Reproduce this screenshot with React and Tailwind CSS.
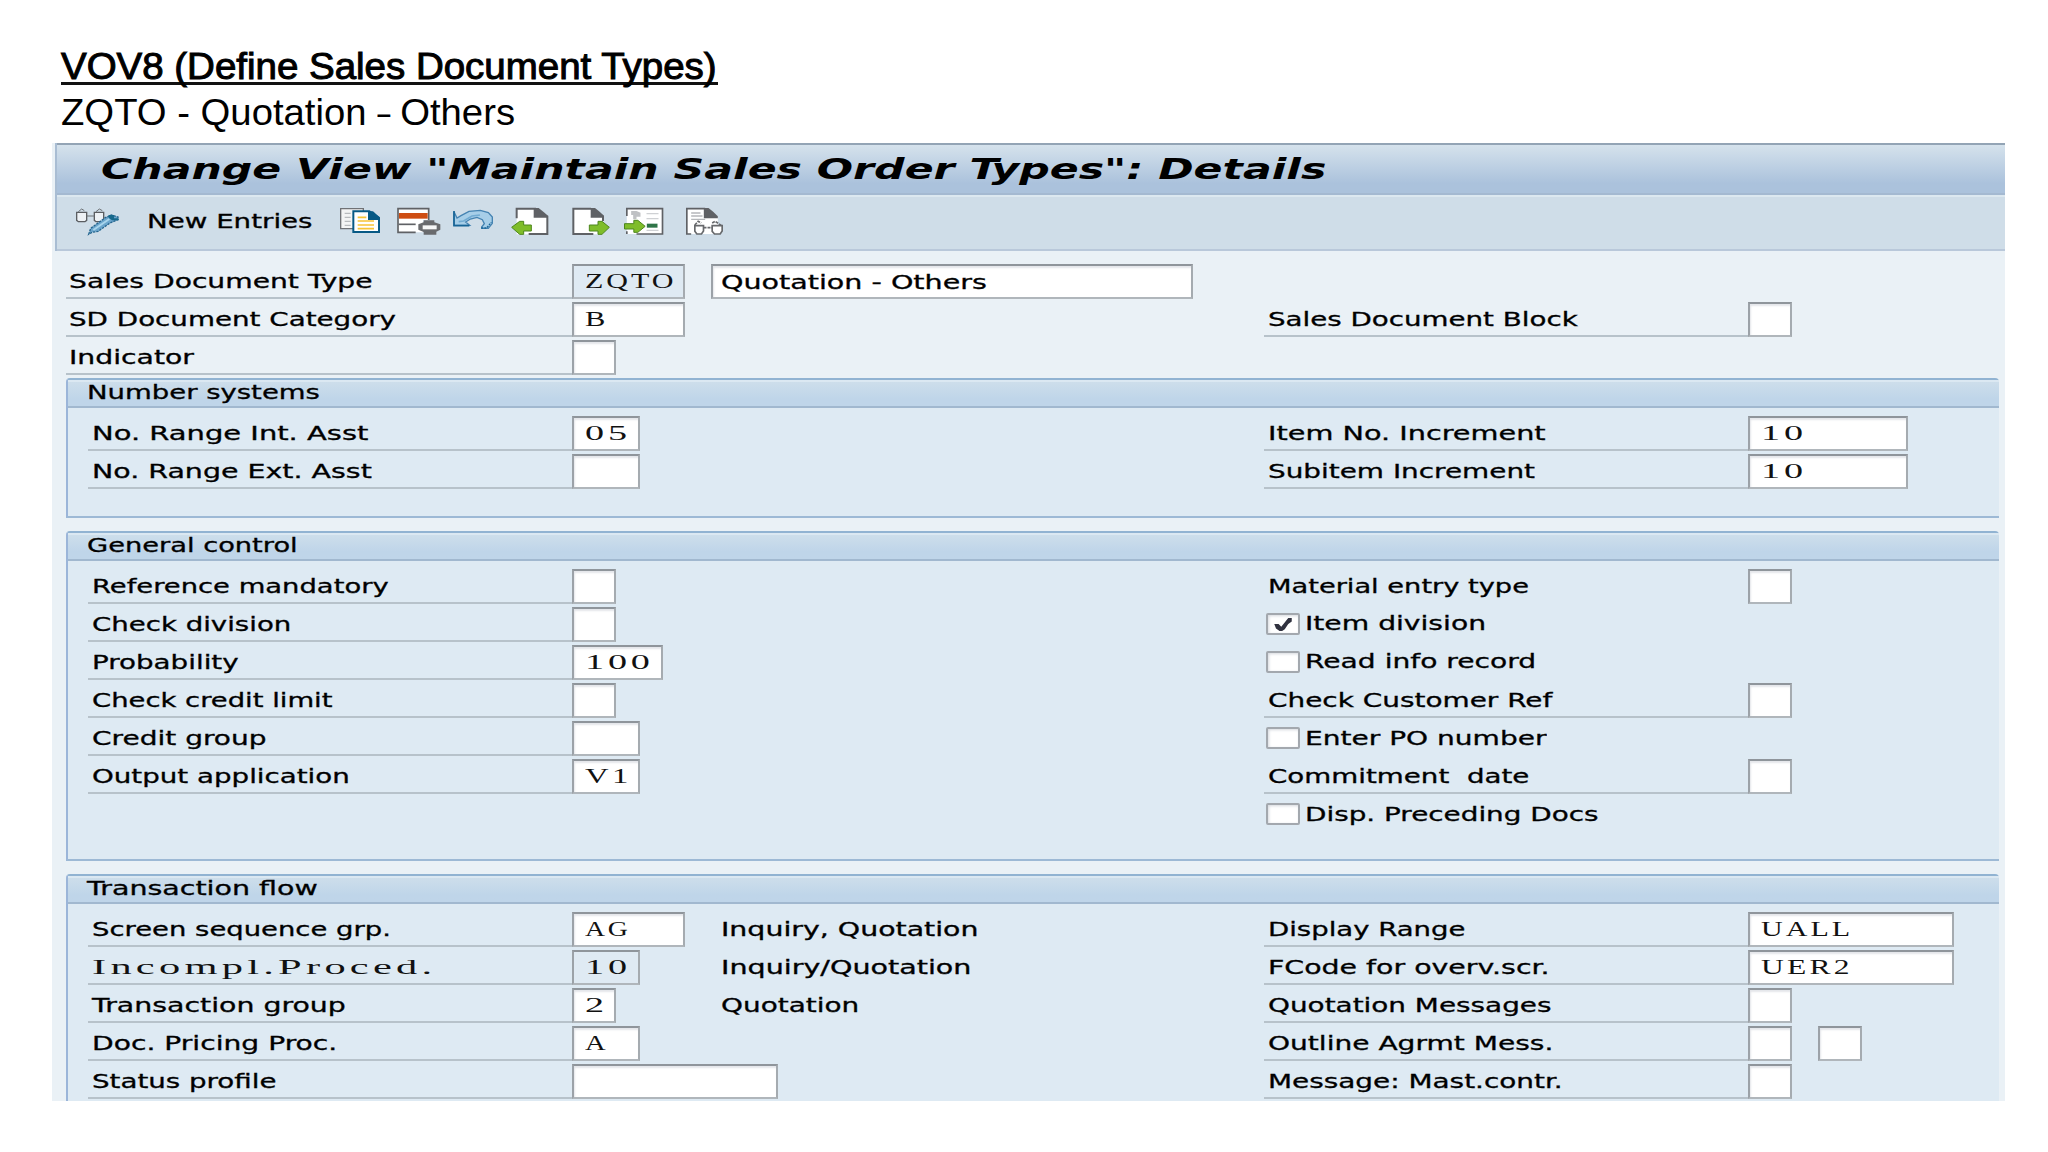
import { useLayoutEffect, useRef, useState } from "react";

// Text stretched horizontally to the given width
function Fit({ w, className = "", children }) {
  const ref = useRef(null);
  const [scale, setScale] = useState(1);

  useLayoutEffect(() => {
    setScale(w / ref.current.offsetWidth);
  }, [w]);

  return (
    <span className="block shrink-0" style={{ width: w }}>
      <span
        ref={ref}
        className={`inline-block origin-left whitespace-pre ${className}`}
        style={{ transform: `scaleX(${scale})` }}
      >
        {children}
      </span>
    </span>
  );
}

const sans =
  "font-['DejaVu_Sans',sans-serif] text-[19px] leading-[24px] text-black [-webkit-text-stroke:0.3px_black]";
const typed = "font-['Liberation_Serif',serif] text-[20px] leading-[24px] tracking-[2px] text-[#111]";

const sizes = {
  xs: "w-[44px]",
  sm: "w-[68px]",
  md: "w-[91px]",
  lg: "w-[113px]",
  xl: "w-[160px]",
  xxl: "w-[206px]",
  text: "w-[482px]",
};

function Field({ value, size = "xs", readOnly, textWidth, plain }) {
  return (
    <div
      className={`flex h-[35px] shrink-0 items-center border-2 border-t-[#8f959b] border-l-[#9ca2a8] border-r-[#a5abb0] border-b-[#b0b6bb] ${
        plain ? "pt-[1px] pl-[8px]" : "pl-[11px]"
      } ${sizes[size]} ${
        readOnly ? "bg-[#dfeaf3]" : "bg-white shadow-[inset_1px_2px_2px_#e4e6ea]"
      }`}
    >
      {value && (
        <Fit w={textWidth || value.length * 22.9} className={plain ? sans : typed}>
          {value}
        </Fit>
      )}
    </div>
  );
}

function Label({ text, w, right, top, monospace, noLine }) {
  const width = right ? "w-[484px] pl-[4px]" : top ? "w-[506px] pl-[3px]" : "w-[484px] pl-[4px]";
  return (
    <div
      className={`flex h-[35px] shrink-0 items-center border-b-2 pt-[2px] ${width} ${
        noLine ? "border-transparent" : "border-[#b7c2ca]"
      }`}
    >
      <Fit w={w} className={monospace ? typed : sans}>
        {text}
      </Fit>
    </div>
  );
}

function Check({ text, w, checked }) {
  return (
    <div className="flex h-[34px] items-center pl-[2px]">
      <span className="mr-[5px] flex h-[22px] w-[34px] items-center justify-center rounded-[2px] border-2 border-[#a3a8ae] bg-white shadow-[inset_1px_1px_3px_#d5d8de]">
        {checked && (
          <svg width="22" height="14" viewBox="0 0 24 16">
            <path d="M2 8h5l3 3L18 1h4v4l-4 3-4 6-3 2H8l-4-3z" fill="#30323f" />
          </svg>
        )}
      </span>
      <Fit w={w} className={sans}>
        {text}
      </Fit>
    </div>
  );
}

// One line of the form: left half has a fixed width so the right column lines up
function Row({ left, right, top }) {
  return (
    <div className="flex h-[38.1px]">
      <div className={`flex shrink-0 ${top ? "w-[1198px]" : "w-[1176px]"}`}>{left}</div>
      <div className="flex">{right}</div>
    </div>
  );
}

function Description({ text, w, size }) {
  const pad = {
    lg: "ml-[36px]",
    sm: "ml-[81px]",
    xs: "ml-[105px]",
  };
  return (
    <div className={`flex h-[35px] items-center ${pad[size]}`}>
      <Fit w={w} className={sans}>
        {text}
      </Fit>
    </div>
  );
}

function Group({ title, w, className, children }) {
  return (
    <section
      className={`rounded-t-[4px] border-t-2 border-b-2 border-l-2 border-t-[#91b3d2] border-b-[#9db9d5] border-l-[#9bb5d9] bg-[#deeaf3] ${className}`}
    >
      <div className="flex h-[28px] items-center border-t-2 border-b-2 border-t-[#dbe8f2] border-b-[#a1b8cf] bg-linear-to-b from-[#cddeeb] to-[#bfd5e9] to-70% pb-[3px] pl-[19px]">
        <Fit w={w} className={sans}>
          {title}
        </Fit>
      </div>
      <div className="pt-[8px] pl-[20px]">{children}</div>
    </section>
  );
}

function DisplayChangeIcon() {
  return (
    <svg className="h-[29px] w-[45px] shrink-0" viewBox="45 36 135 87">
      <path d="M50 52h30v24l-5 4H55l-5-4zM103 52h28v24l-5 4h-18l-5-4z" fill="#edf1f5" stroke="#5a5d61" strokeWidth="4" />
      <path d="M80 63h23M55 50l10-8 8 5M108 50l10-8 9 5" fill="none" stroke="#6c7074" strokeWidth="3" />
      <path d="M86 118l6-18 44-32 18-8 20 6v8l-24 10-36 25-18 3z" fill="#6ba5cc" stroke="#25668f" strokeWidth="4" strokeDasharray="7 3" />
      <path d="M100 105l48-33" stroke="#a8d5ec" strokeWidth="6" />
      <path d="M146 60h16v10h14v6h-20l-10-8z" fill="#17698c" />
    </svg>
  );
}

function CopyIcon() {
  return (
    <svg className="h-[29px] w-[40px] shrink-0" viewBox="840 36 120 87">
      <path d="M842 41h68v60h-68z" fill="#f4f4f4" stroke="#707276" strokeWidth="4" />
      <path d="M854 55h18M854 67h18M854 79h18M854 91h18" stroke="#b8babd" strokeWidth="4" />
      <path d="M880 49h48l29 19v43h-77z" fill="#fff" stroke="#075985" strokeWidth="6" />
      <path d="M924 49h15l19 17v9h-34z" fill="#075985" />
      <path d="M893 67h26M893 78h49M893 90h49M893 101h49" stroke="#f8c436" strokeWidth="5" />
    </svg>
  );
}

function DeleteIcon() {
  return (
    <svg className="h-[29px] w-[44px] shrink-0" viewBox="20 36 132 87">
      <path d="M22 40h94v36H98v36H22z" fill="#fff" />
      <path d="M76 112H23V41h92v34" fill="none" stroke="#5f6165" strokeWidth="5" />
      <path d="M26 54h86v17H26z" fill="#ce4d12" />
      <path d="M25 88h51" stroke="#5f6165" strokeWidth="5" />
      <path d="M84 88l16-6v-6h32v6l18 6v16l-12 6v9h-38v-8l-16-7z" fill="#696a6d" />
      <path d="M97 91h42v12H97z" fill="#f7f7f7" />
    </svg>
  );
}

function UndoIcon() {
  return (
    <svg className="h-[29px] w-[40px] shrink-0" viewBox="190 36 120 87">
      <path
        d="M193 50v41h47l-12-10 14-9 20-5 16 7 6 12-8 10v4h20l12-15V66l-12-13-24-7-34 3-24 13-12 7z"
        fill="#a7cee8"
        stroke="#4583b2"
        strokeWidth="4"
      />
      <path d="M193 48v44h46" fill="none" stroke="#176496" strokeWidth="5" />
      <path d="M275 99h16l14-17" fill="none" stroke="#176496" strokeWidth="4" strokeDasharray="6 3" />
      <path d="M207 80l15-2 25-15 24-3" fill="none" stroke="#72abd2" strokeWidth="5" />
    </svg>
  );
}

function PreviousIcon() {
  return (
    <svg className="h-[29px] w-[38px] shrink-0" viewBox="362 36 114 87">
      <path d="M379 41h53l40 24v53h-93z" fill="#fff" />
      <path d="M379 70V41h58M471 62v55h-56" fill="none" stroke="#5f6165" strokeWidth="6" />
      <path d="M430 39h15l14 11 14 12v6h-43z" fill="#5f6165" />
      <path d="M364 97l24-18h12v11h23v18h-23v10h-12z" fill="#7fbd2a" stroke="#4c861c" strokeWidth="3" />
    </svg>
  );
}

function NextIcon() {
  return (
    <svg className="h-[29px] w-[38px] shrink-0" viewBox="546 36 114 87">
      <path d="M549 41h53l38 25v52h-91z" fill="#fff" />
      <path d="M610 117h-60V41h53M639 62v16" fill="none" stroke="#5f6165" strokeWidth="6" />
      <path d="M602 39h13l14 11 13 12v6h-40z" fill="#5f6165" />
      <path d="M658 97l-22-18h-12v11h-26v18h26v10h12z" fill="#7fbd2a" stroke="#4c861c" strokeWidth="3" />
    </svg>
  );
}

function OtherEntryIcon() {
  return (
    <svg className="h-[29px] w-[41px] shrink-0" viewBox="700 36 122 87">
      <path d="M711 41h107v76H711z" fill="#fff" />
      <path d="M711 63V41h107v76h-78M711 109v8" fill="none" stroke="#5f6165" strokeWidth="5" />
      <path d="M724 48h16l12 5v12h-12v8h-10V60h-6z" fill="#bfc1c4" />
      <path d="M770 56h36M770 71h36M770 106h36" stroke="#cfd1d4" strokeWidth="4" />
      <path d="M771 86h32v12h-32z" fill="#2e7447" />
      <path d="M766 94l-22-18h-12v10h-28v16h28v10h12z" fill="#7fbd2a" stroke="#4c861c" strokeWidth="3" />
    </svg>
  );
}

function PrintPreviewIcon() {
  return (
    <svg className="h-[29px] w-[39px] shrink-0" viewBox="886 36 116 87">
      <path d="M890 41h54l40 24v52h-94z" fill="#fff" />
      <path d="M904 117h-13V41h55" fill="none" stroke="#5f6165" strokeWidth="5" />
      <path d="M942 39h14l14 11 14 14v6h-42z" fill="#5f6165" />
      <path d="M904 54h28M904 63h34M904 73h42" stroke="#b5b7ba" strokeWidth="4" />
      <path d="M915 92h26v16l-6 9h-14l-6-8zM967 92h30v16l-6 9h-17l-7-8z" fill="#fff" stroke="#67696c" strokeWidth="5" />
      <path d="M941 98h26M915 90l10-11 9 5M967 84l9-5 18 12" fill="none" stroke="#67696c" strokeWidth="5" strokeDasharray="9 3" />
    </svg>
  );
}

function Toolbar() {
  return (
    <div className="flex h-[56px] items-start border-t-2 border-b-2 border-t-[#dce8f0] border-b-[#b9c8da] bg-[#cfdde8] pt-[10px] pl-[18px]">
      <DisplayChangeIcon />
      <div className="mt-[2px] mr-[27px] ml-[27px]">
        <Fit w={166} className={sans}>
          New Entries
        </Fit>
      </div>
      <CopyIcon />
      <div className="w-[17px]" />
      <DeleteIcon />
      <div className="w-[12px]" />
      <UndoIcon />
      <div className="w-[18px]" />
      <PreviousIcon />
      <div className="w-[23px]" />
      <NextIcon />
      <div className="w-[13px]" />
      <OtherEntryIcon />
      <div className="w-[21px]" />
      <PrintPreviewIcon />
    </div>
  );
}

export default function App() {
  return (
    <div className="h-[1152px] w-[2048px] overflow-hidden bg-white">
      <header className="h-[143px] pt-[42px] pl-[61px] font-['Liberation_Sans',sans-serif] text-black">
        <div className="h-[43px] w-[657px] border-b-[3px] border-[#111] pt-[1px]">
          <Fit w={656} className="text-[37px] leading-[48px] [-webkit-text-stroke:1px_black]">
            VOV8 (Define Sales Document Types)
          </Fit>
        </div>
        <div className="pt-[4px]">
          <Fit w={454} className="text-[37px] leading-[48px]">
            ZQTO - Quotation{" "}
            <span className="inline-block w-[12px] origin-left scale-x-60">–</span> Others
          </Fit>
        </div>
      </header>

      <main className="ml-[52px] h-[958px] w-[1953px] overflow-hidden bg-[#eaf1f6] pl-[3px]">
        <div className="border-l-2 border-[#a9bdd3]">
          <div className="flex h-[52px] items-start border-t-2 border-b-2 border-t-[#93a4b5] border-b-[#a4b9d1] bg-linear-to-b from-[#d5e2ec] to-[#abc2dc] to-80% pt-[6px] pl-[44px]">
            <Fit
              w={1225}
              className="font-['DejaVu_Sans',sans-serif] text-[29px] leading-[36px] font-bold text-black italic"
            >
              Change View "Maintain Sales Order Types": Details
            </Fit>
          </div>
          <Toolbar />
        </div>

        <div className="pt-[13px] pr-[6px] pl-[11px]">
          <Row
            top
            left={
              <>
                <Label top text="Sales Document Type" w={304} />
                <Field value="ZQTO" size="lg" readOnly />
                <div className="ml-[26px]">
                  <Field value="Quotation - Others" size="text" plain textWidth={266} />
                </div>
              </>
            }
          />
          <Row
            top
            left={
              <>
                <Label top text="SD Document Category" w={327} />
                <Field value="B" size="lg" />
              </>
            }
            right={
              <>
                <Label right text="Sales Document Block" w={309} />
                <Field />
              </>
            }
          />
          <Row
            top
            left={
              <>
                <Label top text="Indicator" w={125} />
                <Field />
              </>
            }
          />

          <Group title="Number systems" w={233} className="h-[140px]">
            <Row
              left={
                <>
                  <Label text="No. Range Int. Asst" w={276} />
                  <Field value="05" size="sm" />
                </>
              }
              right={
                <>
                  <Label right text="Item No. Increment" w={278} />
                  <Field value="10" size="xl" />
                </>
              }
            />
            <Row
              left={
                <>
                  <Label text="No. Range Ext. Asst" w={280} />
                  <Field size="sm" />
                </>
              }
              right={
                <>
                  <Label right text="Subitem Increment" w={267} />
                  <Field value="10" size="xl" />
                </>
              }
            />
          </Group>

          <Group title="General control" w={211} className="mt-[12.5px] h-[330px]">
            <Row
              left={
                <>
                  <Label text="Reference mandatory" w={297} />
                  <Field />
                </>
              }
              right={
                <>
                  <Label right text="Material entry type" w={261} noLine />
                  <Field />
                </>
              }
            />
            <Row
              left={
                <>
                  <Label text="Check division" w={199} />
                  <Field />
                </>
              }
              right={<Check checked text="Item division" w={181} />}
            />
            <Row
              left={
                <>
                  <Label text="Probability" w={146} />
                  <Field value="100" size="md" />
                </>
              }
              right={<Check text="Read info record" w={231} />}
            />
            <Row
              left={
                <>
                  <Label text="Check credit limit" w={241} />
                  <Field />
                </>
              }
              right={
                <>
                  <Label right text="Check Customer Ref" w={285} />
                  <Field />
                </>
              }
            />
            <Row
              left={
                <>
                  <Label text="Credit group" w={174} />
                  <Field size="sm" />
                </>
              }
              right={<Check text="Enter PO number" w={242} />}
            />
            <Row
              left={
                <>
                  <Label text="Output application" w={258} />
                  <Field value="V1" size="sm" />
                </>
              }
              right={
                <>
                  <Label right text="Commitment  date" w={261} />
                  <Field />
                </>
              }
            />
            <Row right={<Check text="Disp. Preceding Docs" w={293} />} />
          </Group>

          <Group title="Transaction flow" w={231} className="mt-[13px] h-[240px]">
            <Row
              left={
                <>
                  <Label text="Screen sequence grp." w={299} />
                  <Field value="AG" size="lg" />
                  <Description size="lg" text="Inquiry, Quotation" w={257} />
                </>
              }
              right={
                <>
                  <Label right text="Display Range" w={197} />
                  <Field value="UALL" size="xxl" />
                </>
              }
            />
            <Row
              left={
                <>
                  <Label text="Incompl.Proced." w={344} monospace />
                  <Field value="10" size="sm" readOnly />
                  <Description size="sm" text="Inquiry/Quotation" w={251} />
                </>
              }
              right={
                <>
                  <Label right text="FCode for overv.scr." w={281} />
                  <Field value="UER2" size="xxl" />
                </>
              }
            />
            <Row
              left={
                <>
                  <Label text="Transaction group" w={254} />
                  <Field value="2" />
                  <Description size="xs" text="Quotation" w={138} />
                </>
              }
              right={
                <>
                  <Label right text="Quotation Messages" w={283} />
                  <Field />
                </>
              }
            />
            <Row
              left={
                <>
                  <Label text="Doc. Pricing Proc." w={246} />
                  <Field value="A" size="sm" />
                </>
              }
              right={
                <>
                  <Label right text="Outline Agrmt Mess." w={285} />
                  <Field />
                  <div className="ml-[26px]">
                    <Field />
                  </div>
                </>
              }
            />
            <Row
              left={
                <>
                  <Label text="Status profile" w={185} />
                  <Field size="xxl" />
                </>
              }
              right={
                <>
                  <Label right text="Message: Mast.contr." w={295} />
                  <Field />
                </>
              }
            />
          </Group>
        </div>
      </main>
    </div>
  );
}
